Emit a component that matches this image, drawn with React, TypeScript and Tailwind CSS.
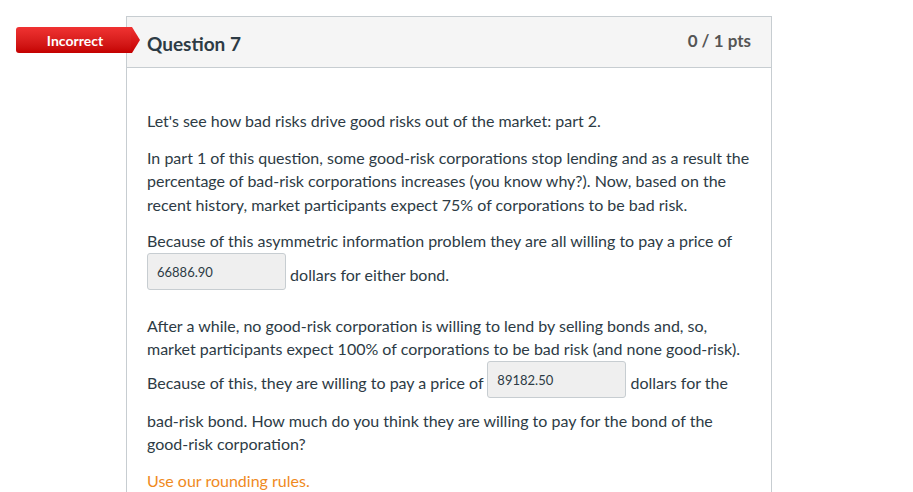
export default function App() {
  const font = { fontFamily: 'Lato, "Noto Sans", sans-serif' }

  return (
    <div className="relative min-h-[492px] bg-white pl-[126px] pt-[16px] text-[#2d3b45]" style={font}>
      {/* badge over the panel edge */}
      <div className="absolute left-[16px] top-[27px] flex h-[26px]">
        <div className="flex w-[115px] items-center justify-center rounded-l-[3px] bg-gradient-to-b from-[#f03232] to-[#c40000] pl-[3px] text-[14px] font-bold text-white">
          Incorrect
        </div>
        <svg width="9" height="26" viewBox="0 0 9 26">
          <defs>
            <linearGradient id="g" x1="0" y1="0" x2="0" y2="1">
              <stop offset="0" stopColor="#f03232" />
              <stop offset="1" stopColor="#c40000" />
            </linearGradient>
          </defs>
          <path d="M0 0 L1 0 L9 13 L1 26 L0 26 Z" fill="url(#g)" />
        </svg>
      </div>

      <div className="w-[646px] border border-b-0 border-[#c7cdd1]">
        <div className="flex h-[51px] items-center justify-between border-b border-[#c7cdd1] bg-[#f5f5f5] px-[20px] pt-[4px]">
          <h2 className="text-[19px] font-bold">Question 7</h2>
          <span className="pb-[7px] text-[17px] font-bold text-[#555]">0 / 1 pts</span>
        </div>

        <div className="px-[20px] pt-[41px] pb-[10px] text-[16px] leading-[23.5px]">
          <p className="mb-[13px]">Let's see how bad risks drive good risks out of the market: part 2.</p>
          <p className="mb-[13px]">
            In part 1 of this question, some good-risk corporations stop lending and as a result the percentage of
            bad-risk corporations increases (you know why?). Now, based on the recent history, market participants
            expect 75% of corporations to be bad risk.
          </p>
          <p className="mb-[13px]">
            Because of this asymmetric information problem they are all willing to pay a price of{' '}
            <AnswerBox value="66886.90" /> dollars for either bond.
          </p>
          <p className="mb-[13px]">
            After a while, no good-risk corporation is willing to lend by selling bonds and, so, market participants
            expect 100% of corporations to be bad risk (and none good-risk). Because of this, they are willing to pay a
            price of <AnswerBox value="89182.50" /> dollars for the bad-risk bond. How much do you think they are
            willing to pay for the bond of the good-risk corporation?
          </p>
          <p className="text-[#ef8a1e]">Use our rounding rules.</p>
        </div>
      </div>
    </div>
  )
}

function AnswerBox({ value }: { value: string }) {
  return (
    <span className="mb-[11px] inline-flex h-[37px] w-[139px] items-center rounded-[3px] border border-[#c7cdd1] bg-[#efefef] px-[9px] pt-[3px] align-middle text-[13px]">
      {value}
    </span>
  )
}
